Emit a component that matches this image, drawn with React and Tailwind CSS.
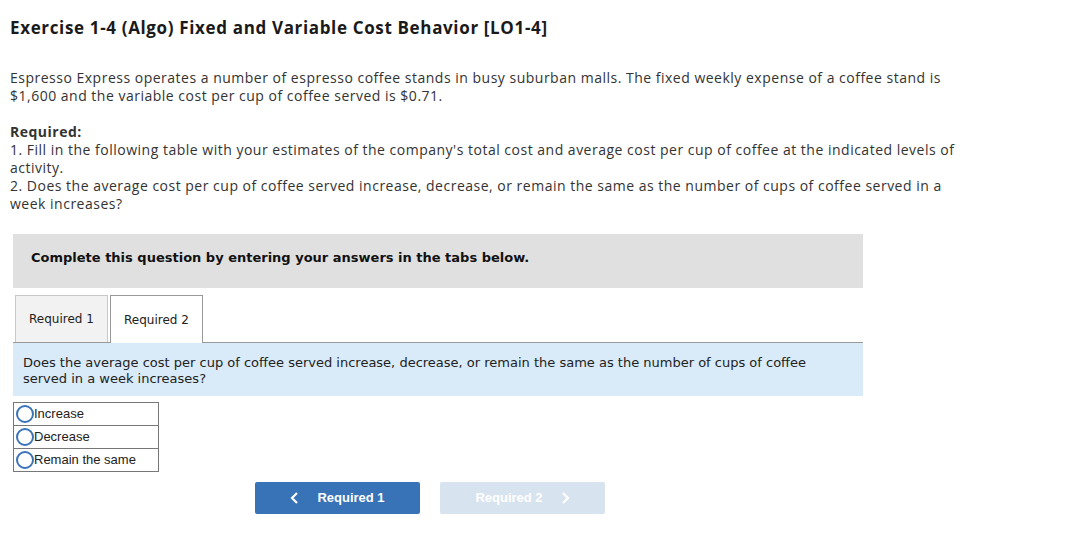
import React from 'react';

const options = ['Increase', 'Decrease', 'Remain the same'];

export default function App() {
    return (
        <div className="min-h-[549px] bg-white pl-[10px] pr-4 pt-[16px] text-[#222]">
            <h1 className="font-['Open_Sans',sans-serif] text-[17px] font-bold leading-[24px] tracking-[0.65px] text-[#1a1a1a]">
                Exercise 1-4 (Algo) Fixed and Variable Cost Behavior [LO1-4]
            </h1>

            <div className="mt-[29px] max-w-[965px] font-['Open_Sans',sans-serif] text-[14px] leading-[18px] tracking-[0.5px] text-[#333]">
                <p>
                    Espresso Express operates a number of espresso coffee stands in busy suburban malls. The fixed weekly expense of a coffee stand is $1,600 and the variable cost per cup of coffee served is $0.71.
                </p>
                <p className="mt-[18px] font-bold">Required:</p>
                <p>
                    1. Fill in the following table with your estimates of the company's total cost and average cost per cup of coffee at the indicated levels of activity.
                </p>
                <p>
                    2. Does the average cost per cup of coffee served increase, decrease, or remain the same as the number of cups of coffee served in a week increases?
                </p>
            </div>

            <div className="ml-[3px] mt-[21px] w-[850px] font-['DejaVu_Sans',Verdana,sans-serif]">
                <div className="flex h-[54px] items-center bg-[#e0e0e0] pb-[6px] pl-[18px] text-[13px] font-bold text-[#111]">
                    Complete this question by entering your answers in the tabs below.
                </div>

                <div className="mt-[7px] flex gap-[2px] pl-[2px]">
                    <button className="h-[47px] w-[93px] border border-b-0 border-[#c8c8c8] bg-[#f2f2f2] text-[12px] text-[#222]">
                        Required 1
                    </button>
                    <button className="relative z-10 -mb-px h-[48px] w-[93px] border border-b-0 border-[#999] bg-white text-[12px] text-[#222]">
                        Required 2
                    </button>
                </div>

                <div className="border-t border-[#999] bg-[#d9ebf9] px-[10px] pb-[9px] pt-[12px] text-[13px] leading-[16px] text-[#222]">
                    <p className="max-w-[800px]">
                        Does the average cost per cup of coffee served increase, decrease, or remain the same as the number of cups of coffee served in a week increases?
                    </p>
                </div>
            </div>

            <table className="ml-[3px] mt-[6px] border-collapse font-['Liberation_Sans',Arial,sans-serif] text-[13px] text-[#222]">
                <tbody>
                    {options.map((o) => (
                        <tr key={o}>
                            <td className="h-[23px] w-[145px] border border-[#777] p-0">
                                <label className="flex items-center">
                                    <span className="ml-[2px] inline-block h-[18px] w-[18px] rounded-full border-2 border-[#3b73b9]" />
                                    <span>{o}</span>
                                </label>
                            </td>
                        </tr>
                    ))}
                </tbody>
            </table>

            <div className="mt-[10px] flex gap-[20px] pl-[245px] font-['Liberation_Sans',Arial,sans-serif] text-[13px] font-bold text-white">
                <button className="flex h-[32px] w-[165px] items-center justify-center gap-[18px] rounded-[2px] bg-[#3873b8]">
                    <svg width="9" height="12" viewBox="0 0 9 12" fill="none" stroke="white" strokeWidth="2.2">
                        <path d="M7 1L2 6l5 5" />
                    </svg>
                    Required 1
                </button>
                <button className="flex h-[32px] w-[165px] items-center justify-center gap-[18px] rounded-[2px] bg-[#d8e3f0]">
                    Required 2
                    <svg width="9" height="12" viewBox="0 0 9 12" fill="none" stroke="white" strokeWidth="2.2">
                        <path d="M2 1l5 5-5 5" />
                    </svg>
                </button>
            </div>
        </div>
    );
}
